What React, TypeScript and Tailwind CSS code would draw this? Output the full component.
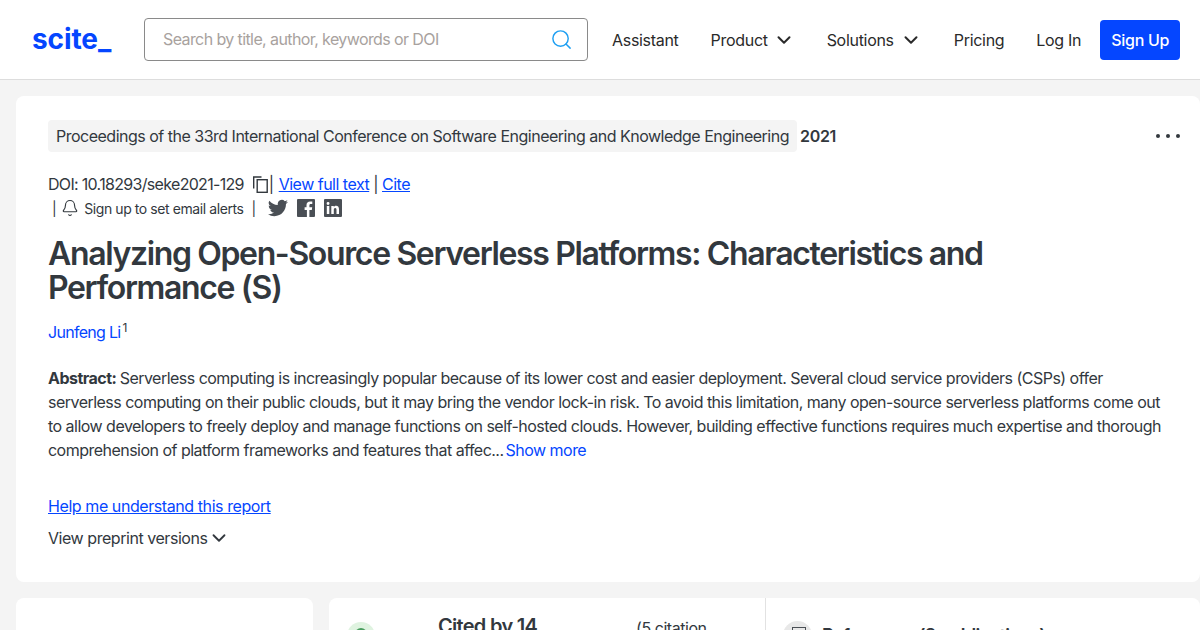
import { ChevronDown, Search, Bell } from 'lucide-react'

const body = "font-['Inter','Liberation_Sans',sans-serif]"

function TwitterIcon() {
  return (
    <svg viewBox="0 0 24 24" className="w-[20px] h-[20px] fill-[#4a4f55]">
      <path d="M23.95 4.57a10 10 0 0 1-2.82.77 4.96 4.96 0 0 0 2.16-2.72c-.95.55-2 .95-3.12 1.18a4.92 4.92 0 0 0-8.38 4.48C7.69 8.1 4.07 6.13 1.64 3.16a4.9 4.9 0 0 0 1.52 6.57 4.9 4.9 0 0 1-2.23-.61v.06a4.92 4.92 0 0 0 3.95 4.83 5 5 0 0 1-2.21.08 4.94 4.94 0 0 0 4.6 3.42A9.87 9.87 0 0 1 0 19.54a13.94 13.94 0 0 0 7.55 2.21c9.05 0 14-7.5 14-13.98 0-.21 0-.42-.02-.63a9.94 9.94 0 0 0 2.46-2.55z" />
    </svg>
  )
}

function FacebookIcon() {
  return (
    <svg viewBox="0 0 18 18" className="w-[18px] h-[18px] fill-[#4a4f55]">
      <path d="M1 0h16a1 1 0 0 1 1 1v16a1 1 0 0 1-1 1h-4.6v-7h2.4l.4-2.8h-2.8V6.5c0-.8.3-1.4 1.4-1.4h1.5V2.6c-.3 0-1.2-.1-2.2-.1-2.2 0-3.6 1.3-3.6 3.7v2H7.6V11h2.3v7H1a1 1 0 0 1-1-1V1a1 1 0 0 1 1-1z" />
    </svg>
  )
}

function LinkedinIcon() {
  return (
    <svg viewBox="0 0 18 18" className="w-[18px] h-[18px] fill-[#4a4f55]">
      <path fillRule="evenodd" d="M1 0h16a1 1 0 0 1 1 1v16a1 1 0 0 1-1 1H1a1 1 0 0 1-1-1V1a1 1 0 0 1 1-1zm1.800 7v8h2.500V7H2.800zm1.250-4a1.450 1.450 0 1 0 0 2.900 1.450 1.450 0 0 0 0-2.900zM7.300 7v8h2.500v-4.200c0-1.100.4-1.900 1.400-1.900s1.300.8 1.300 1.900V15H15v-4.800c0-2.300-1.200-3.400-2.900-3.400-1.200 0-1.900.6-2.300 1.200V7H7.300z" />
    </svg>
  )
}

// two sheets, the front one tall and narrow
function CopyIcon() {
  return (
    <svg viewBox="0 0 16 17" className="w-[16px] h-[17px] ml-[8px] fill-none stroke-[#32383e] stroke-[1.4]">
      <path d="M9.500 1H1.700V12.500" />
      <rect x="5.200" y="3.700" width="10" height="12.600" />
    </svg>
  )
}

export default function App() {
  return (
    <div className={`${body} w-[1200px] h-[630px] overflow-hidden bg-[#f4f4f4] text-[#32383e]`}>
      <header className="h-[80px] bg-white border-b border-[#dddddd] flex items-center pl-[32px] pr-[20px]">
        <span className="text-[#0546ff] text-[28px] font-bold leading-none w-[112px] shrink-0 tracking-[-0.1px] mb-[2px]">scite_</span>
        <div className="w-[444px] h-[43px] shrink-0 border border-[#8a8a8a] rounded flex items-center justify-between pl-[18px] pr-[14px]">
          <span className="text-[16px] text-[#a8a29e] tracking-[-0.6px] mb-[1px]">Search by title, author, keywords or DOI</span>
          <Search className="w-[23px] h-[23px] text-[#1e9ff2]" strokeWidth={1.5} />
        </div>
        <nav className="flex items-center text-[16px] text-[#2a2a2a] ml-[24px] tracking-[-0.3px] whitespace-nowrap">
          <span>Assistant</span>
          <span className="ml-[32px]">Product</span>
          <ChevronDown className="w-[22px] h-[22px] ml-[5px]" strokeWidth={2.2} />
          <span className="ml-[32px]">Solutions</span>
          <ChevronDown className="w-[22px] h-[22px] ml-[6px]" strokeWidth={2.2} />
          <span className="ml-[32px]">Pricing</span>
          <span className="ml-[32px]">Log In</span>
          <span className="ml-[19px] w-[80px] h-[40px] rounded bg-[#0546ff] text-white font-medium flex items-center justify-center">Sign Up</span>
        </nav>
      </header>

      <main className="pl-[16px] pt-[16px]">
        <section className="w-[1184px] h-[486px] bg-white rounded-lg pl-[32px] pt-[24px] relative">
          <div className="flex items-center">
            <span className="bg-[#f4f4f4] rounded px-[8px] h-[32px] flex items-center text-[16px] tracking-[-0.5px]">Proceedings of the 33rd International Conference on Software Engineering and Knowledge Engineering</span>
            <span className="font-semibold text-[16px] ml-[3px] tracking-[-0.3px]">2021</span>
          </div>
          <div className="absolute left-[1140px] top-[38px] flex gap-[6px]">
            <span className="w-[4px] h-[4px] rounded-full bg-[#32383e]" />
            <span className="w-[4px] h-[4px] rounded-full bg-[#32383e]" />
            <span className="w-[4px] h-[4px] rounded-full bg-[#32383e]" />
          </div>
          <div className="mt-[20px] flex items-center h-[24px] text-[16px] tracking-[-0.5px]">
            <span className="tracking-[-0.68px]">DOI: 10.18293/seke2021-129</span>
            <CopyIcon />
            <span className="ml-[1px]">|</span>
            <a className="ml-[5px] text-[#0546ff] underline">View full text</a>
            <span className="ml-[4px]">|</span>
            <a className="ml-[4px] text-[#0546ff] underline">Cite</a>
          </div>
          <div className="flex items-center h-[24px] text-[14px] tracking-[-0.42px]">
            <span className="ml-[4px]">|</span>
            <Bell className="w-[18px] h-[18px] ml-[5px]" strokeWidth={1.5} />
            <span className="ml-[5px]">Sign up to set email alerts</span>
            <span className="ml-[8px]">|</span>
            <span className="ml-[12px] flex items-center gap-[9px]">
              <TwitterIcon />
              <FacebookIcon />
              <LinkedinIcon />
            </span>
          </div>
          <h1 className="mt-[17px] text-[32px] leading-[34px] font-semibold tracking-[-1.36px] w-[1000px]">Analyzing Open-Source Serverless Platforms: Characteristics and Performance (S)</h1>
          <div className="mt-[15px] h-[24px] text-[16px] text-[#0546ff] tracking-[-0.7px]">
            Junfeng Li<sup className="text-[#32383e] text-[12px] ml-[2px]">1</sup>
          </div>
          <p className="mt-[22px] w-[1120px] text-[16px] leading-[24px] tracking-[-0.52px]">
            <b className="font-bold">Abstract: </b>Serverless computing is increasingly popular because of its lower cost and easier deployment. Several cloud service providers (CSPs) offer serverless computing on their public clouds, but it may bring the vendor lock-in risk. To avoid this limitation, many open-source serverless platforms come out to allow developers to freely deploy and manage functions on self-hosted clouds. However, building effective functions requires much expertise and thorough comprehension of platform frameworks and features that affec... <span className="text-[#0546ff] -ml-[2px]">Show more</span>
          </p>
          <a className="block mt-[32px] h-[24px] text-[16px] text-[#0546ff] underline tracking-[-0.42px]">Help me understand this report</a>
          <div className="mt-[8px] h-[24px] flex items-center text-[16px] tracking-[-0.45px]">
            View preprint versions
            <ChevronDown className="w-[22px] h-[22px]" strokeWidth={2} />
          </div>
        </section>

        <div className="mt-[16px] flex gap-[16px]">
          <div className="w-[297px] h-[60px] bg-white rounded-lg shrink-0" />
          <div className="w-[871px] h-[60px] bg-white rounded-lg flex shrink-0">
            <div className="w-[437px] border-r border-[#e2e2e2] relative overflow-hidden">
              <span className="absolute left-[18px] top-[24px] w-[28px] h-[28px] rounded-full bg-[#dff3e0]" />
              <span className="absolute left-[26px] top-[30px] w-[12px] h-[12px] rounded-full bg-[#4a9d5f]" />
              <span className="absolute left-[109px] top-[13px] text-[20px] font-semibold tracking-[-0.7px]">Cited by 14</span>
              <span className="absolute left-[307px] top-[18px] text-[16px] tracking-[-0.45px]">(5 citation</span>
            </div>
            <div className="relative flex-1 overflow-hidden">
              <span className="absolute left-[17px] top-[23px] w-[29px] h-[29px] rounded-full bg-[#e8e8e8]" />
              <span className="absolute left-[26px] top-[29px] w-[14px] h-[14px] border border-[#4a4f55]" />
              <span className="absolute left-[56px] top-[24px] text-[18px] font-semibold tracking-[-0.6px]">References (8 publications)</span>
            </div>
          </div>
        </div>
      </main>
    </div>
  )
}
